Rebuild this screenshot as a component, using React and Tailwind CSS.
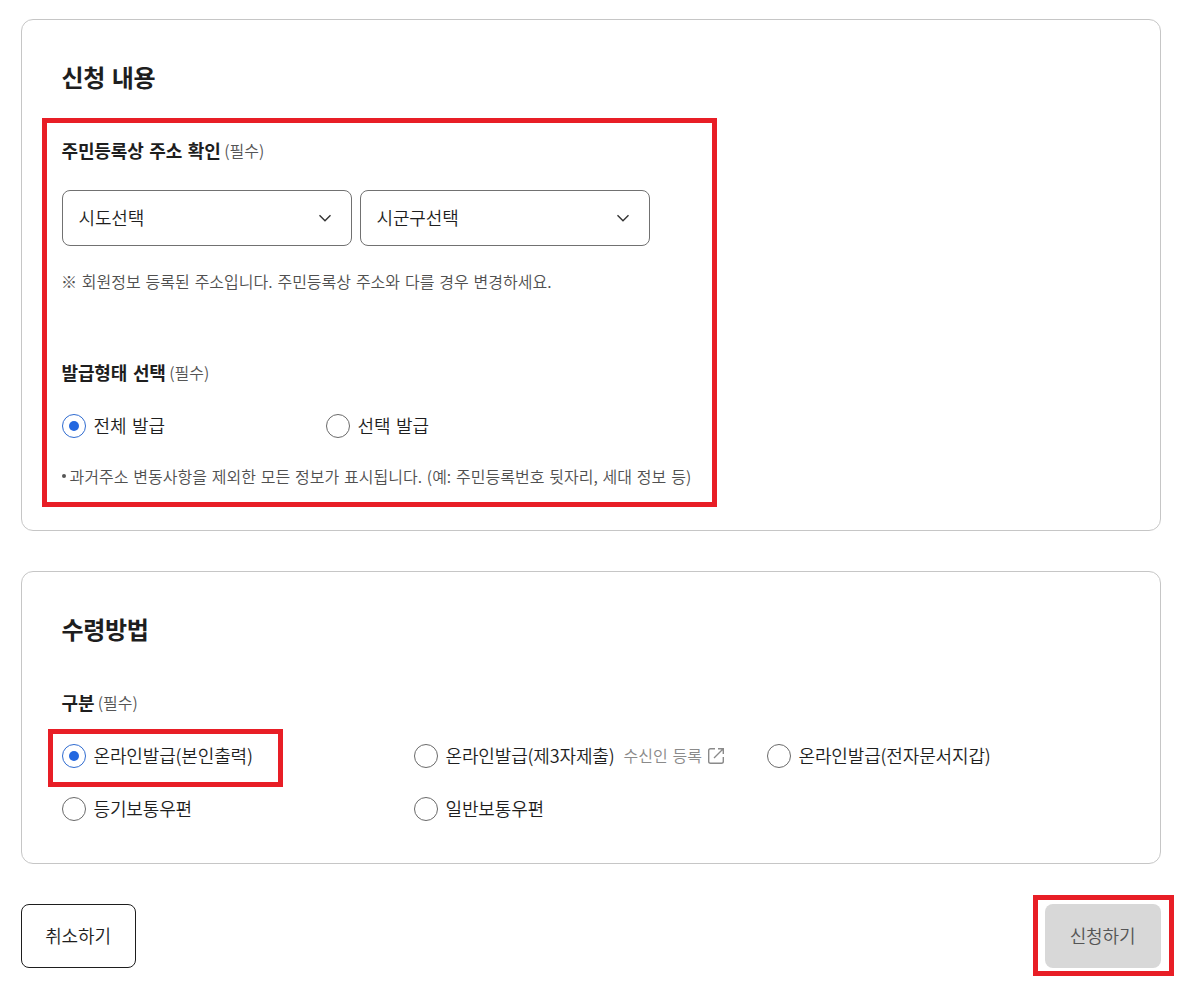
const font = "font-['Noto_Sans_CJK_KR','Noto_Sans',sans-serif]";
const body = "text-[18px] tracking-[-0.15px] [word-spacing:1.8px]";
const small = "text-[16px] [word-spacing:1.3px]";
const heading = "text-2xl font-bold leading-9 tracking-[-0.3px] [word-spacing:1.5px]";

function Radio({ checked, label, children }) {
  return (
    <div className="flex h-6 items-center">
      <span className={checked ? "flex size-6 shrink-0 items-center justify-center rounded-full border border-[#2f6bd0] bg-white" : "flex size-6 shrink-0 rounded-full border border-[#6a6a6a] bg-white"}>
        {checked && <span className="size-2.5 rounded-full bg-[#2468e0]" />}
      </span>
      <span className={`-mt-[3px] ml-[7.5px] whitespace-nowrap leading-6 ${body}`}>{label}</span>
      {children}
    </div>
  );
}

function Select({ label }) {
  return (
    <div className="flex h-14 w-[290px] items-center justify-between rounded-lg border border-[#717171] bg-white pl-[15.5px] pr-5">
      <span className={`-mt-0.5 ${body}`}>{label}</span>
      <svg className="size-3" viewBox="0 0 12 12" fill="none" stroke="#333" strokeWidth="1.4">
        <path d="M0.5 3.2 6 8.8 11.5 3.2" />
      </svg>
    </div>
  );
}

function Label({ children }) {
  return (
    <div className="-ml-[0.5px] flex h-6 items-center whitespace-nowrap pb-0.5">
      <span className={`font-bold ${body}`}>{children}</span>
      <span className={`ml-[3.5px] font-[350] text-[#555] ${small}`}>(필수)</span>
    </div>
  );
}

export default function App() {
  return (
    <div className={`${font} h-[1004px] w-[1183px] overflow-hidden bg-white pl-[21px] pt-[19px] font-[350] text-[#1e1e1e]`}>
      <section className="h-[512px] w-[1140px] rounded-xl border border-[#c6c6c6] px-5 pt-[39px]">
        <h2 className={`ml-[19.5px] h-9 ${heading}`}>신청 내용</h2>
        <div className="mt-[23px] h-[389px] w-[675px] border-5 border-[#e81e26] pl-[15px] pt-4">
          <Label>주민등록상 주소 확인</Label>
          <div className="mt-[27px] flex gap-2">
            <Select label="시도선택" />
            <Select label="시군구선택" />
          </div>
          <p className={`-ml-px mt-[23px] whitespace-nowrap leading-6 text-[#505050] ${small}`}>※ 회원정보 등록된 주소입니다. 주민등록상 주소와 다를 경우 변경하세요.</p>
          <div className="mt-[68px]"><Label>발급형태 선택</Label></div>
          <div className="mt-[29px] grid grid-cols-[264px_1fr]">
            <Radio checked label="전체 발급" />
            <Radio label="선택 발급" />
          </div>
          <p className={`mt-[26px] flex items-center whitespace-nowrap leading-6 text-[#505050] ${small}`}>
            <span className="mr-[3.5px] size-1 rounded-full bg-[#555]" />
            과거주소 변동사항을 제외한 모든 정보가 표시됩니다. (예: 주민등록번호 뒷자리, 세대 정보 등)
          </p>
        </div>
      </section>
      <section className="mt-10 h-[293px] w-[1140px] rounded-xl border border-[#c6c6c6] px-10 pt-[39px]">
        <h2 className={`-ml-[0.5px] h-9 ${heading}`}>수령방법</h2>
        <div className="mt-11"><Label>구분</Label></div>
        <div className="mt-[29px] grid grid-cols-[352px_353px_1fr] gap-y-[29px]">
          <div className="relative">
            <Radio checked label="온라인발급(본인출력)" />
            <div className="absolute -left-3.5 -top-[15px] h-[58px] w-[235px] border-5 border-[#e81e26]" />
          </div>
          <Radio label="온라인발급(제3자제출)">
            <span className={`-mt-0.5 ml-[9px] whitespace-nowrap text-[#8a8a8a] ${small}`}>수신인 등록</span>
            <svg className="ml-1.5 size-4" viewBox="0 0 16 16" fill="none" stroke="#8a8a8a" strokeWidth="1.4">
              <path d="M7 .7H2.5Q.7.7.7 2.5V13.5Q.7 15.3 2.5 15.3H13.5Q15.3 15.3 15.3 13.5V9M10 .7H15.3V6M15 1 6 10" />
            </svg>
          </Radio>
          <Radio label="온라인발급(전자문서지갑)" />
          <Radio label="등기보통우편" />
          <Radio label="일반보통우편" />
        </div>
      </section>
      <div className="mt-[31px] flex items-center justify-between pr-[9px]">
        <button className={`h-16 w-[115px] rounded-lg border border-[#1e1e1e] pr-px ${body}`}>취소하기</button>
        <div className="h-[81px] w-[141px] border-5 border-[#e81e26] pl-[7px] pt-1">
          <button className={`h-16 w-[116px] rounded-lg bg-[#d8d8d8] pb-0.5 pr-px text-[#555] ${body}`}>신청하기</button>
        </div>
      </div>
    </div>
  );
}
